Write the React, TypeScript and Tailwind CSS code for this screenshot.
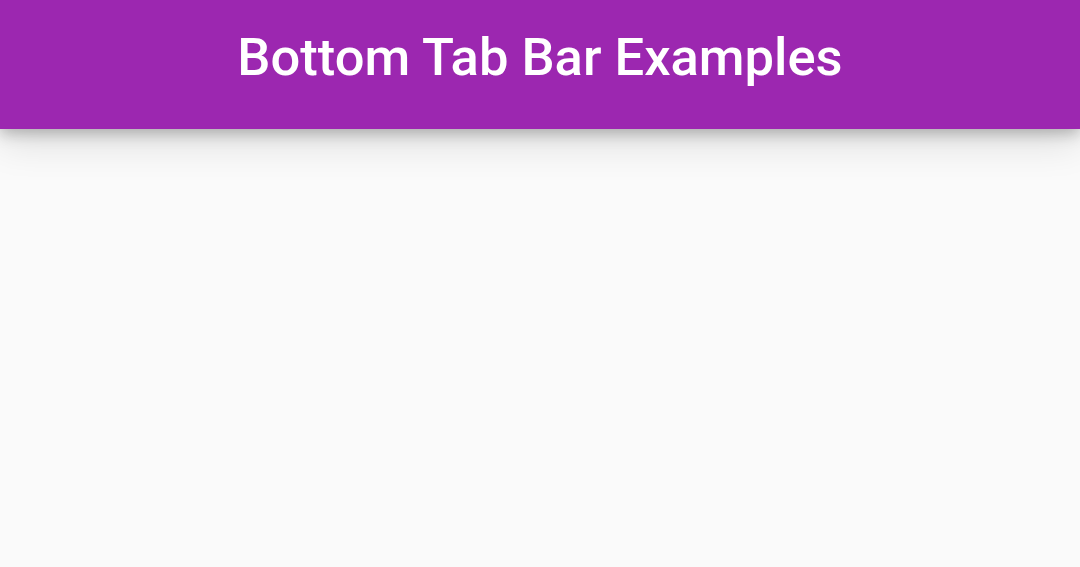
export default function App() {
	return (
		<div className="h-[567px] w-full bg-[#fafafa] overflow-hidden" style={{ fontFamily: 'Roboto, "Liberation Sans", sans-serif' }}>
			{/* App bar */}
			<header className="relative z-10 flex h-[129px] items-center justify-center bg-[#9c27b0] pb-[15px] shadow-[0_4px_14px_rgba(0,0,0,0.25),0_14px_36px_rgba(0,0,0,0.12)]">
				<h1 className="text-[52.5px] font-medium leading-none text-white">Bottom Tab Bar Examples</h1>
			</header>
		</div>
	);
}
